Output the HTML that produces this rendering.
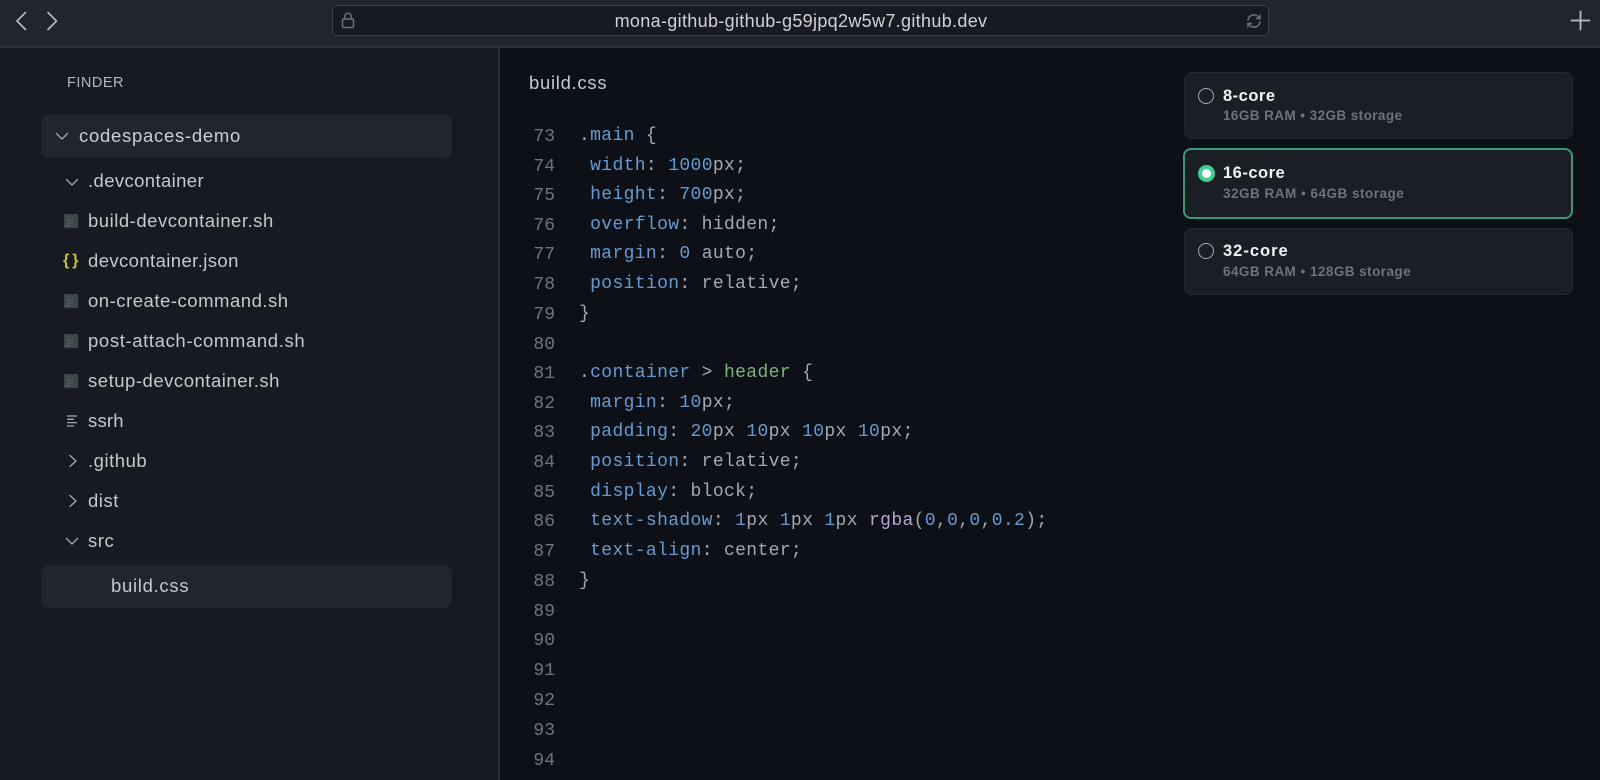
<!DOCTYPE html>
<html>
<head>
<meta charset="utf-8">
<style>
html,body{margin:0;padding:0;width:1600px;height:780px;overflow:hidden;background:#0d1117}
body{position:relative;font-family:"Liberation Sans",sans-serif}
div,svg,span.a{position:absolute}
#top{left:0;top:0;width:1600px;height:46px;background:#22252d;border-bottom:2px solid #2d3038}
#url{left:332px;top:5px;width:935px;height:29px;background:#171a21;border:1.5px solid #3a3e47;border-radius:5px}
#urlt{left:332px;top:5px;width:938px;height:32px;line-height:33px;text-align:center;color:#d0d2d6;font-size:18px;letter-spacing:.33px;white-space:nowrap}
#side{left:0;top:48px;width:498px;height:732px;background:#171a21;border-right:2px solid #2a2d34}
.sel{left:41px;width:411px;height:43px;background:#22252d;border-radius:8px}
.t{color:#c6c8cd;font-size:18.5px;letter-spacing:.52px;height:30px;line-height:30px;white-space:nowrap}
.code{left:579px;margin-top:2px;color:#a4a9b0;font:18px/30px "Liberation Mono",monospace;letter-spacing:.35px;white-space:pre;height:30px}
.n{left:521.500px;width:33.500px;margin-top:2px;text-align:right;color:#6f747b;font:18px/30px "Liberation Mono",monospace;height:30px}
.b{color:#659bd2}.g{color:#7fb27f}.p{color:#b9a6d6}
.card{left:1184px;width:387px;height:65px;background:#1b1e25;border:1px solid #24282f;border-radius:8px}
.radio{left:1198px;width:14px;height:14px;border:1.5px solid #a6a9ae;border-radius:50%}
.h{left:1223px;color:#f2f3f5;font-size:16.5px;font-weight:bold;letter-spacing:.5px;height:24px;line-height:24px;white-space:nowrap}
.s{left:1223px;color:#6e727a;font-size:13.5px;font-weight:bold;height:20px;line-height:20px;white-space:nowrap;letter-spacing:.42px}
</style>
</head>
<body>
<div id="top"></div>
<svg style="left:14px;top:10px" width="46" height="22" viewBox="0 0 46 22" fill="none" stroke="#b9bcc2" stroke-width="1.6" stroke-linecap="round" stroke-linejoin="round"><path d="M11.5 2.5 3 11l8.500 8.500"/><path d="M34 2.500 42.500 11 34 19.500"/></svg>
<div id="url"></div>
<svg style="left:340px;top:12px" width="16" height="17" viewBox="0 0 16 17" fill="none" stroke="#6c7078" stroke-width="1.500"><rect x="2.500" y="7" width="11" height="8.500" rx="1.500"/><path d="M4.800 7V4.500a3.200 3.200 0 0 1 6.400 0V7"/></svg>
<div id="urlt">mona-github-github-g59jpq2w5w7.github.dev</div>
<svg style="left:1245px;top:12px" width="18" height="18" viewBox="0 0 18 18" fill="none" stroke="#6c7078" stroke-width="1.500" stroke-linecap="round"><path d="M3 8a6 6 0 0 1 10.500-3L15 6.500"/><path d="M15 3v3.500h-3.500"/><path d="M15 10a6 6 0 0 1-10.500 3L3 11.500"/><path d="M3 15v-3.500h3.500"/></svg>
<svg style="left:1570px;top:10px" width="21" height="21" viewBox="0 0 21 21" fill="none" stroke="#b9bcc2" stroke-width="1.800" stroke-linecap="round"><path d="M10.500 1.500v18M1.500 10.500h18"/></svg>

<div id="side"></div>
<div class="t" style="left:67px;top:68px;font-size:14.500px;letter-spacing:.5px;color:#b4b7bc">FINDER</div>
<div class="sel" style="top:115px"></div>
<div class="sel" style="top:565px"></div>

<svg style="left:55px;top:131px" width="14" height="10" viewBox="0 0 14 10" fill="none" stroke="#a5a8ae" stroke-width="1.300" stroke-linecap="round" stroke-linejoin="round"><path d="M1.500 2.500 7 8l5.500-5.500"/></svg>
<div class="t" style="left:79px;top:121px;font-weight:normal;color:#ccced3;letter-spacing:.72px">codespaces-demo</div>

<svg style="left:65px;top:177px" width="14" height="10" viewBox="0 0 14 10" fill="none" stroke="#a5a8ae" stroke-width="1.300" stroke-linecap="round" stroke-linejoin="round"><path d="M1.500 2.500 7 8l5.500-5.500"/></svg>
<div class="t" style="left:88px;top:166px;letter-spacing:.38px">.devcontainer</div>

<svg style="left:64px;top:214px" width="14" height="14" viewBox="0 0 14 14"><rect width="14" height="14" fill="#3d4649"/><path d="M2 3h3M2 6h8M2 9h7M2 11.500h5" stroke="#596366" stroke-width="1"/></svg>
<div class="t" style="left:88px;top:206px">build-devcontainer.sh</div>

<div class="t" style="left:63px;top:246px;color:#c4c43c;font-weight:bold;font-size:16px;letter-spacing:3px">{}</div>
<div class="t" style="left:88px;top:246px;letter-spacing:.4px">devcontainer.json</div>

<svg style="left:64px;top:294px" width="14" height="14" viewBox="0 0 14 14"><rect width="14" height="14" fill="#3d4649"/><path d="M2 3h3M2 6h8M2 9h7M2 11.500h5" stroke="#596366" stroke-width="1"/></svg>
<div class="t" style="left:88px;top:286px">on-create-command.sh</div>

<svg style="left:64px;top:334px" width="14" height="14" viewBox="0 0 14 14"><rect width="14" height="14" fill="#3d4649"/><path d="M2 3h3M2 6h8M2 9h7M2 11.500h5" stroke="#596366" stroke-width="1"/></svg>
<div class="t" style="left:88px;top:326px;letter-spacing:.62px">post-attach-command.sh</div>

<svg style="left:64px;top:374px" width="14" height="14" viewBox="0 0 14 14"><rect width="14" height="14" fill="#3d4649"/><path d="M2 3h3M2 6h8M2 9h7M2 11.500h5" stroke="#596366" stroke-width="1"/></svg>
<div class="t" style="left:88px;top:366px">setup-devcontainer.sh</div>

<svg style="left:66px;top:414px" width="12" height="14" viewBox="0 0 12 14" fill="none" stroke="#a5a8ae" stroke-width="1.300"><path d="M1 2h10M1 5.300h7M1 8.600h10M1 12h7"/></svg>
<div class="t" style="left:88px;top:406px;letter-spacing:.2px">ssrh</div>

<svg style="left:68px;top:454px" width="10" height="14" viewBox="0 0 10 14" fill="none" stroke="#a5a8ae" stroke-width="1.300" stroke-linecap="round" stroke-linejoin="round"><path d="M2 1.500 8 7l-6 5.500"/></svg>
<div class="t" style="left:88px;top:446px">.github</div>

<svg style="left:68px;top:494px" width="10" height="14" viewBox="0 0 10 14" fill="none" stroke="#a5a8ae" stroke-width="1.300" stroke-linecap="round" stroke-linejoin="round"><path d="M2 1.500 8 7l-6 5.500"/></svg>
<div class="t" style="left:88px;top:486px">dist</div>

<svg style="left:65px;top:536px" width="14" height="10" viewBox="0 0 14 10" fill="none" stroke="#a5a8ae" stroke-width="1.300" stroke-linecap="round" stroke-linejoin="round"><path d="M1.500 2.500 7 8l5.500-5.500"/></svg>
<div class="t" style="left:88px;top:526px">src</div>

<div class="t" style="left:111px;top:571px;letter-spacing:.7px">build.css</div>

<div class="t" style="left:529px;top:68px;color:#c6c8cd;letter-spacing:.7px">build.css</div>

<div class="n" style="top:120px">73</div><div class="code" style="top:119px">.<span class="b">main</span> {</div>
<div class="n" style="top:150px">74</div><div class="code" style="top:149px"> <span class="b">width</span>: <span class="b">1000</span>px;</div>
<div class="n" style="top:179px">75</div><div class="code" style="top:178px"> <span class="b">height</span>: <span class="b">700</span>px;</div>
<div class="n" style="top:209px">76</div><div class="code" style="top:208px"> <span class="b">overflow</span>: hidden;</div>
<div class="n" style="top:238px">77</div><div class="code" style="top:237px"> <span class="b">margin</span>: <span class="b">0</span> auto;</div>
<div class="n" style="top:268px">78</div><div class="code" style="top:267px"> <span class="b">position</span>: relative;</div>
<div class="n" style="top:298px">79</div><div class="code" style="top:297px">}</div>
<div class="n" style="top:328px">80</div>
<div class="n" style="top:357px">81</div><div class="code" style="top:356px">.<span class="b">container</span> &gt; <span class="g">header</span> {</div>
<div class="n" style="top:387px">82</div><div class="code" style="top:386px"> <span class="b">margin</span>: <span class="b">10</span>px;</div>
<div class="n" style="top:416px">83</div><div class="code" style="top:415px"> <span class="b">padding</span>: <span class="b">20</span>px <span class="b">10</span>px <span class="b">10</span>px <span class="b">10</span>px;</div>
<div class="n" style="top:446px">84</div><div class="code" style="top:445px"> <span class="b">position</span>: relative;</div>
<div class="n" style="top:476px">85</div><div class="code" style="top:475px"> <span class="b">display</span>: block;</div>
<div class="n" style="top:505px">86</div><div class="code" style="top:504px"> <span class="b">text-shadow</span>: <span class="b">1</span>px <span class="b">1</span>px <span class="b">1</span>px <span class="p">rgba</span>(<span class="b">0</span>,<span class="b">0</span>,<span class="b">0</span>,<span class="b">0.2</span>);</div>
<div class="n" style="top:535px">87</div><div class="code" style="top:534px"> <span class="b">text-align</span>: center;</div>
<div class="n" style="top:565px">88</div><div class="code" style="top:564px">}</div>
<div class="n" style="top:595px">89</div>
<div class="n" style="top:624px">90</div>
<div class="n" style="top:654px">91</div>
<div class="n" style="top:684px">92</div>
<div class="n" style="top:714px">93</div>
<div class="n" style="top:744px">94</div>

<div class="card" style="top:72px"></div>
<div class="card" style="left:1183px;top:148px;width:386px;height:67px;border:2px solid #3a9a77"></div>
<div class="card" style="top:228px"></div>

<div class="radio" style="top:88px"></div>
<div class="h" style="top:84px">8-core</div>
<div class="s" style="top:106px">16GB RAM • 32GB storage</div>

<div class="radio" style="top:165px;width:9px;height:9px;background:#fff;border:4px solid #3ecf95"></div>
<div class="h" style="top:161px">16-core</div>
<div class="s" style="top:184px;letter-spacing:.5px">32GB RAM • 64GB storage</div>

<div class="radio" style="top:243px"></div>
<div class="h" style="top:239px;letter-spacing:1px">32-core</div>
<div class="s" style="top:262px;letter-spacing:.45px">64GB RAM • 128GB storage</div>
</body>
</html>
